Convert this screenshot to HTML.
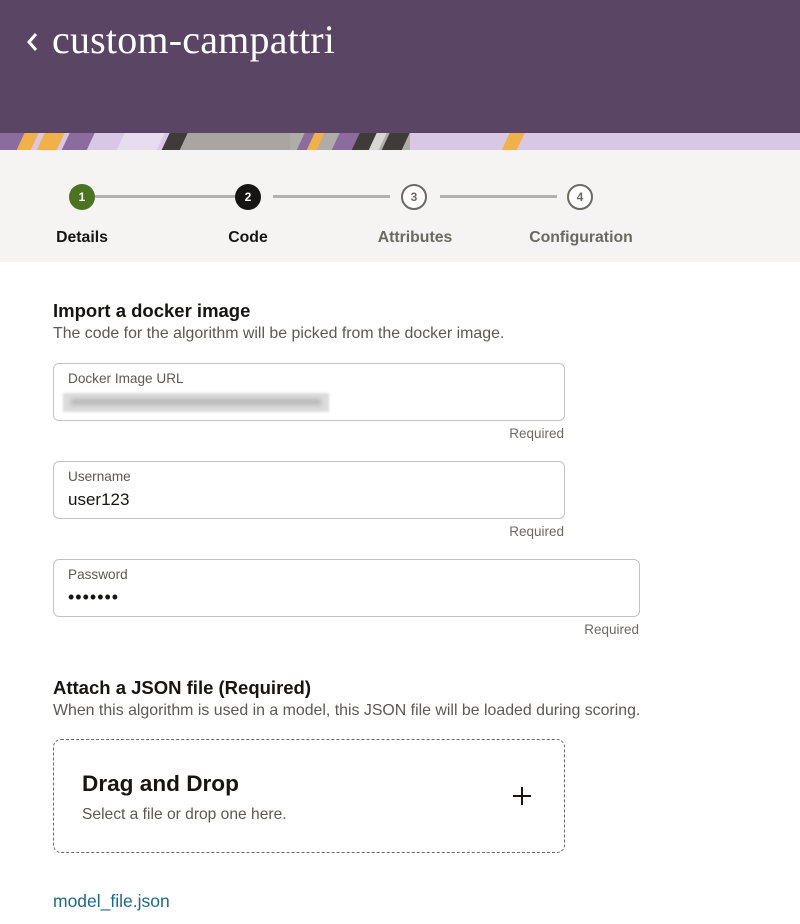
<!DOCTYPE html>
<html><head><meta charset="utf-8"><style>
*{box-sizing:border-box;margin:0;padding:0}
body{width:800px;height:924px;overflow:hidden;background:#fff;font-family:"Liberation Sans",sans-serif;color:#161513;position:relative}
.hdr{position:absolute;left:0;top:0;width:800px;height:133px;background:#5a4564}
.hdr h1{position:absolute;left:52px;top:16px;font-family:"Liberation Serif",serif;font-weight:normal;font-size:40px;color:#fff;letter-spacing:0.2px}
.hdr svg{position:absolute;left:24px;top:30px}
.band{position:absolute;left:0;top:133px;width:800px;height:17px;overflow:hidden;background:#d8c8e6}
.band div{position:absolute;top:-5px;height:30px;transform:skewX(-25deg)}
.step{position:absolute;left:0;top:150px;width:800px;height:112px;background:#f5f4f2}
.c{position:absolute;width:26px;height:26px;border-radius:50%;top:184px;font-size:12px;font-weight:bold;text-align:center;line-height:26px}
.ln{position:absolute;top:195px;height:3px;background:#b3b1ad}
.lb{position:absolute;top:229px;font-size:15.8px;font-weight:bold;text-align:center;width:140px}
.sec{position:absolute;left:53px;font-size:18.5px;font-weight:bold}
.sub{position:absolute;left:53px;font-size:15.9px;color:#5b5955}
.in{position:absolute;left:53px;height:58px;border:1px solid #c4c2be;border-radius:6px}
.in .l{position:absolute;left:14px;top:7px;font-size:13.6px;color:#5b5955}
.in .v{position:absolute;left:14px;top:28px;font-size:17px}
.rq{position:absolute;font-size:13.5px;color:#6b6964;text-align:right;width:100px}
</style></head><body>
<div class="hdr">
<svg width="16" height="24" viewBox="0 0 16 24"><path d="M12 4 L5 12 L12 20" stroke="#fff" stroke-width="3" fill="none"/></svg>
<h1>custom-campattri</h1></div>
<div class="band">
<div style="left:-10px;width:30px;background:#8a6d9e"></div>
<div style="left:20px;width:14px;background:#f2b04a"></div>
<div style="left:40px;width:20px;background:#f2b04a"></div>
<div style="left:65px;width:25px;background:#8a6d9e"></div>
<div style="left:120px;width:40px;background:#e8dcf0"></div>
<div style="left:165px;width:20px;background:#8a6d9e"></div>
<div style="left:175px;width:180px;background:#a9a6a2"></div>
<div style="left:165px;width:18px;background:#3e3b39"></div>
<div style="left:290px;width:120px;background:#b0aca8;transform:none"></div>
<div style="left:300px;width:20px;background:#8a6d9e"></div>
<div style="left:310px;width:10px;background:#f2b04a"></div>
<div style="left:335px;width:20px;background:#8a6d9e"></div>
<div style="left:355px;width:25px;background:#3e3b39"></div>
<div style="left:372px;width:10px;background:#d8d6d3"></div>
<div style="left:385px;width:20px;background:#3e3b39"></div>
<div style="left:505px;width:15px;background:#f2b04a"></div>
</div>
<div class="step"></div>
<div class="ln" style="left:95px;width:142px"></div>
<div class="ln" style="left:273px;width:117px"></div>
<div class="ln" style="left:440px;width:117px"></div>
<div class="c" style="left:69px;background:#4b7320;color:#fff">1</div>
<div class="c" style="left:235px;background:#161513;color:#fff">2</div>
<div class="c" style="left:401px;border:2px solid #6b6964;background:#fff;color:#6b6964;line-height:22px">3</div>
<div class="c" style="left:567px;border:2px solid #6b6964;background:#fff;color:#6b6964;line-height:22px">4</div>
<div class="lb" style="left:12px">Details</div>
<div class="lb" style="left:178px">Code</div>
<div class="lb" style="left:345px;color:#6b6964">Attributes</div>
<div class="lb" style="left:511px;color:#6b6964">Configuration</div>
<div class="sec" style="top:300px">Import a docker image</div>
<div class="sub" style="top:325px">The code for the algorithm will be picked from the docker image.</div>
<div class="in" style="top:363px;width:512px"><div class="l">Docker Image URL</div><div style="position:absolute;left:9px;top:29px;width:266px;height:19px;background:#dcdcdc;filter:blur(1px)"><div style="margin:6px 8px;height:6px;background:#b5b5b5;filter:blur(2px)"></div></div></div>
<div class="rq" style="top:426px;left:464px">Required</div>
<div class="in" style="top:461px;width:512px"><div class="l">Username</div><div class="v">user123</div></div>
<div class="rq" style="top:524px;left:464px">Required</div>
<div class="in" style="top:559px;width:587px"><div class="l">Password</div><div class="v" style="top:27px;font-size:18px;letter-spacing:1px">•••••••</div></div>
<div class="rq" style="top:622px;left:539px">Required</div>
<div class="sec" style="top:677px">Attach a JSON file (Required)</div>
<div class="sub" style="top:702px">When this algorithm is used in a model, this JSON file will be loaded during scoring.</div>
<div style="position:absolute;left:53px;top:739px;width:512px;height:114px;border:1px dashed #6b6964;border-radius:8px">
<div style="position:absolute;left:28px;top:31px;font-size:22.6px;font-weight:bold">Drag and Drop</div>
<div style="position:absolute;left:28px;top:66px;font-size:15.6px;color:#5b5955">Select a file or drop one here.</div>
<svg style="position:absolute;left:458px;top:46px" width="20" height="20"><path d="M10 1V19M1 10H19" stroke="#161513" stroke-width="2"/></svg>
</div>
<div style="position:absolute;left:53px;top:891px;font-size:17.5px;color:#1b6a8a">model_file.json</div>
</body></html>
